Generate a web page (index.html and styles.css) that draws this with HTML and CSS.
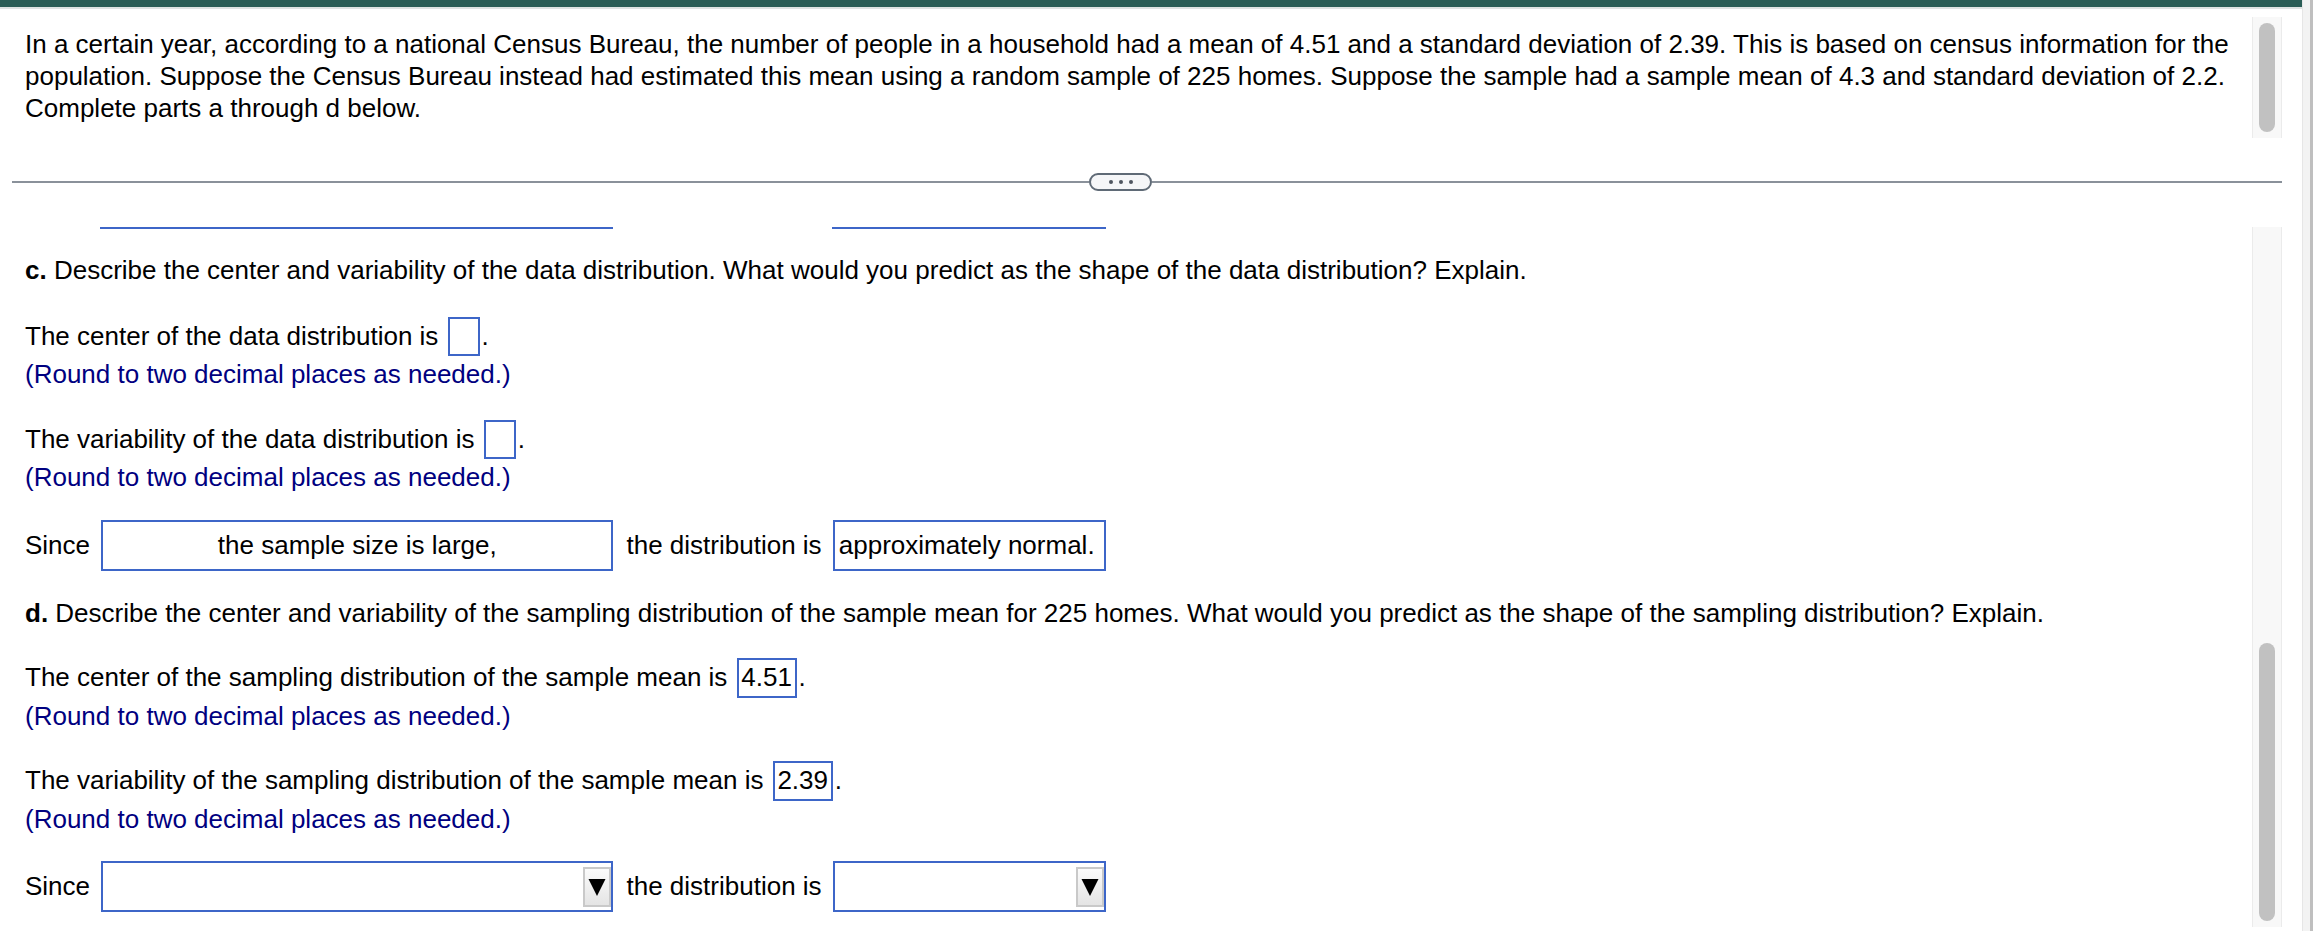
FILE: index.html
```html
<!DOCTYPE html>
<html lang="en">
<head>
<meta charset="utf-8">
<title>Question</title>
<link rel="stylesheet" href="styles.css">
</head>
<body>
<div class="page">
  <div class="main">
    <div class="topbar"></div>
    <div class="stem">
      <div class="stem-text">In a certain year, according to a national Census Bureau, the number of people in a household had a mean of 4.51 and a standard deviation of 2.39. This is based on census information for the population. Suppose the Census Bureau instead had estimated this mean using a random sample of 225 homes. Suppose the sample had a sample mean of 4.3 and standard deviation of 2.2. Complete parts a through d below.</div>
      <div class="track track-top"><div class="thumb thumb-top"></div></div>
    </div>
    <div class="divider">
      <div class="rule rule-left"></div>
      <div class="more"><span class="dot"></span><span class="dot"></span><span class="dot"></span></div>
      <div class="rule rule-right"></div>
    </div>
    <div class="work">
      <div class="work-content">
        <div class="cut-lines"><div class="cut cut-a"></div><div class="cut cut-b"></div></div>

        <p class="part part-c"><b>c.</b> Describe the center and variability of the data distribution. What would you predict as the shape of the data distribution? Explain.</p>

        <p class="qline q1">The center of the data distribution is <span class="blank"></span>.</p>
        <p class="note">(Round to two decimal places as needed.)</p>

        <p class="qline q2">The variability of the data distribution is <span class="blank"></span>.</p>
        <p class="note">(Round to two decimal places as needed.)</p>

        <p class="since since-c">Since <span class="choice choice-wide centered">the sample size is large,</span> the distribution is <span class="choice choice-narrow">approximately normal.</span></p>

        <p class="part part-d"><b>d.</b> Describe the center and variability of the sampling distribution of the sample mean for 225 homes. What would you predict as the shape of the sampling distribution? Explain.</p>

        <p class="qline q3">The center of the sampling distribution of the sample mean is <span class="filled">4.51</span>.</p>
        <p class="note">(Round to two decimal places as needed.)</p>

        <p class="qline q4">The variability of the sampling distribution of the sample mean is <span class="filled">2.39</span>.</p>
        <p class="note">(Round to two decimal places as needed.)</p>

        <p class="since since-d">Since <span class="select choice-wide"><span class="select-space">&nbsp;</span><span class="arrow"><svg width="18" height="18" viewBox="0 0 18 18"><polygon points="0.5,1 17.5,1 9,18" fill="#000"/></svg></span></span> the distribution is <span class="select choice-narrow"><span class="select-space">&nbsp;</span><span class="arrow"><svg width="18" height="18" viewBox="0 0 18 18"><polygon points="0.5,1 17.5,1 9,18" fill="#000"/></svg></span></span></p>
      </div>
      <div class="track track-bottom"><div class="thumb thumb-bottom"></div></div>
    </div>
  </div>
  <div class="page-scroll"><div class="page-scroll-bar"></div></div>
</div>
</body>
</html>
```
FILE: styles.css
```css
html, body {
  margin: 0;
  padding: 0;
  background: #ffffff;
}
body {
  font-family: "Liberation Sans", Arial, Helvetica, sans-serif;
  font-size: 26px;
  color: #000000;
  overflow: hidden;
}
.page {
  display: flex;
  width: 2313px;
  height: 931px;
  overflow: hidden;
}
.main {
  width: 2302px;
  display: flex;
  flex-direction: column;
}
.topbar {
  height: 7px;
  background: #2b5e57;
  border-bottom: 2px solid #dfe4e3;
}
.stem {
  display: flex;
  height: 129px;
}
.stem-text {
  flex: 1;
  padding: 19px 0 0 25px;
  line-height: 32px;
  width: 2220px;
}
.track {
  width: 28px;
  background: #f8f8f8;
  border-left: 1px solid #ebebeb;
  border-right: 1px solid #ebebeb;
  margin-right: 20px;
  margin-left: 7px;
  display: flex;
  flex-direction: column;
  align-items: center;
}
.track-top {
  margin-top: 8px;
  height: 121px;
}
.thumb {
  width: 16px;
  background: #c1c1c1;
  border-radius: 8px;
}
.thumb-top {
  margin-top: 6px;
  height: 109px;
}
.divider {
  height: 88px;
  display: flex;
  align-items: center;
  padding-left: 12px;
  padding-right: 20px;
}
.rule {
  height: 2px;
  background: #8a919a;
}
.rule-left {
  width: 1077px;
}
.rule-right {
  flex: 1;
}
.more {
  width: 59px;
  height: 14px;
  border: 2px solid #5f6a76;
  border-radius: 9px;
  background: #f5f6f8;
  display: flex;
  align-items: center;
  justify-content: center;
  gap: 6px;
}
.dot {
  width: 4px;
  height: 4px;
  border-radius: 50%;
  background: #4f5660;
}
.work {
  display: flex;
  flex: 1;
}
.work-content {
  flex: 1;
  padding-left: 25px;
  line-height: 31px;
}
.track-bottom {
  margin-top: 1px;
  height: 700px;
}
.thumb-bottom {
  margin-top: 416px;
  height: 278px;
}
.cut-lines {
  display: flex;
  margin-top: 1px;
  padding-left: 75px;
}
.cut {
  height: 2px;
  background: #3d66c8;
}
.cut-a {
  width: 513px;
}
.cut-b {
  width: 274px;
  margin-left: 219px;
}
p {
  margin: 0;
  white-space: nowrap;
}
.part-c {
  margin-top: 25.5px;
}
.note {
  color: #000080;
  margin-top: 3px;
}
.q1 {
  margin-top: 31.5px;
}
.q2 {
  margin-top: 29.5px;
}
.blank {
  display: inline-block;
  width: 28px;
  height: 35px;
  border: 2px solid #3d66c8;
  vertical-align: -11px;
  margin: 0 2px 0 2px;
}
.filled {
  display: inline-block;
  width: 56px;
  height: 34px;
  padding-bottom: 2px;
  line-height: 34px;
  border: 2px solid #3d66c8;
  text-align: center;
  margin: 0 2px 0 2px;
}
.since-c {
  margin-top: 27.5px;
}
.part-d {
  margin-top: 26.5px;
}
.q3 {
  margin-top: 29.5px;
}
.q4 {
  margin-top: 28.5px;
}
.since-d {
  margin-top: 26.5px;
}
.choice {
  display: inline-block;
  height: 47px;
  line-height: 47px;
  border: 2px solid #3d66c8;
  vertical-align: baseline;
  padding: 0 4px;
}
.choice.choice-wide {
  width: 500px;
}
.choice.choice-narrow {
  width: 261px;
}
.choice-wide {
  margin: 0 6px 0 4px;
}
.choice-narrow {
  margin: 0 0 0 4px;
}
.centered {
  text-align: center;
}
.select {
  display: inline-flex;
  align-items: center;
  height: 47px;
  border: 2px solid #3d66c8;
  vertical-align: baseline;
  padding: 0 0 0 4px;
}
.select.choice-wide {
  width: 504px;
}
.select.choice-narrow {
  width: 265px;
}
.select-space {
  flex: 1;
  line-height: 47px;
}
.arrow {
  width: 24px;
  height: 36px;
  border: 2px solid #c9c9c9;
  background: linear-gradient(#fbfbfb, #e4e4e4);
  display: flex;
  align-items: center;
  justify-content: center;
}
.arrow svg {
  display: block;
}
.page-scroll {
  width: 11px;
  background: #f3f3f3;
  border-left: 1px solid #e6e6e6;
  display: flex;
  justify-content: flex-end;
  box-sizing: border-box;
}
.page-scroll-bar {
  width: 3px;
  background: #bfbfbf;
}
```
